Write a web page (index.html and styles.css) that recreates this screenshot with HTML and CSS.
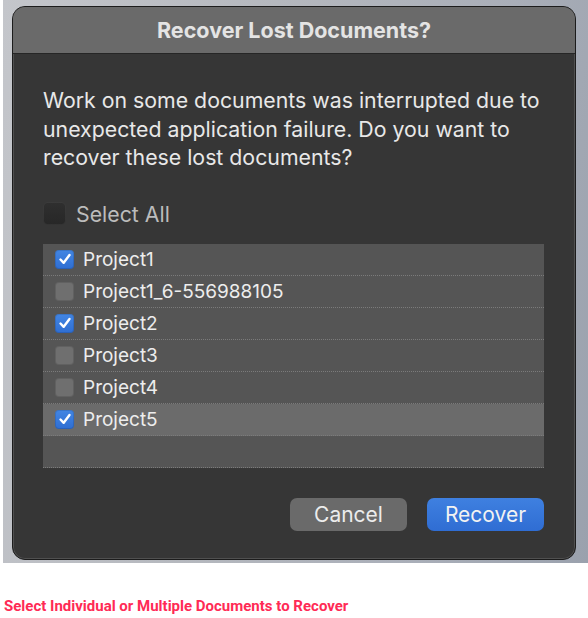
FILE: index.html
```html
<!DOCTYPE html>
<html lang="en">
  <head>
    <meta charset="UTF-8" />
    <meta name="viewport" content="width=device-width, initial-scale=1.0" />
    <title>Recover Lost Documents</title>
    <link rel="stylesheet" href="styles.css">
  </head>
  <body>
    <div class="screenshot">
      <div class="dialog">
        <div class="dialog-title">Recover Lost Documents?</div>

        <div class="dialog-body">
          <p class="message">
            Work on some documents was interrupted due to unexpected application failure. Do you want to recover these lost documents?
          </p>

          <label class="select-all">
            <span class="big-box"></span>
            <span>Select All</span>
          </label>

          <ul class="doc-list">
            <li class="doc-row">
              <span class="box checked">
                <svg viewBox="0 0 16 16"><path d="M3.5 8.5 L6.7 11.8 L12.5 4" /></svg>
              </span>
              Project1
            </li>
            <li class="doc-row">
              <span class="box"></span>
              Project1_6-556988105
            </li>
            <li class="doc-row">
              <span class="box checked">
                <svg viewBox="0 0 16 16"><path d="M3.5 8.5 L6.7 11.8 L12.5 4" /></svg>
              </span>
              Project2
            </li>
            <li class="doc-row">
              <span class="box"></span>
              Project3
            </li>
            <li class="doc-row">
              <span class="box"></span>
              Project4
            </li>
            <li class="doc-row selected">
              <span class="box checked">
                <svg viewBox="0 0 16 16"><path d="M3.5 8.5 L6.7 11.8 L12.5 4" /></svg>
              </span>
              Project5
            </li>
            <li class="doc-row empty"></li>
          </ul>

          <div class="dialog-footer">
            <button class="btn btn-cancel">Cancel</button>
            <button class="btn btn-recover">Recover</button>
          </div>
        </div>
      </div>
    </div>

    <p class="caption">Select Individual or Multiple Documents to Recover</p>
  </body>
</html>
```

FILE: styles.css
```css
body {
  margin: 0;
  background-color: #fff;
  font-family: Inter, "Noto Sans", sans-serif;
  overflow: hidden;
}

.screenshot {
  margin-left: 3px;
  width: 585px;
  height: 563px;
  padding: 6px 0 0 9px;
  box-sizing: border-box;
  background: linear-gradient(100deg, #c4c6cb 0%, #b5b8be 40%, #a9aeb8 75%, #9aa1ad 100%);
}

.dialog {
  width: 564px;
  height: 554px;
  box-sizing: border-box;
  background-color: #363636;
  border: 1px solid #1c1c1c;
  border-radius: 13px;
  box-shadow: inset 0 0 0 1px rgba(255, 255, 255, 0.13);
  overflow: hidden;
}

.dialog-title {
  height: 46px;
  display: flex;
  align-items: center;
  justify-content: center;
  background-color: #6a6a6a;
  border-bottom: 1px solid #262626;
  color: #e4e4e4;
  font-size: 21.5px;
  font-weight: 700;
}

.dialog-body {
  padding: 32px 31px 0 30px;
}

.message {
  margin: 0;
  font-size: 21.3px;
  line-height: 28.5px;
  color: #e8e8e8;
}

.select-all {
  display: flex;
  align-items: center;
  gap: 10px;
  margin-top: 30px;
  height: 24px;
  font-size: 21.3px;
  color: #bcbcbc;
}

.big-box {
  width: 23px;
  height: 23px;
  border-radius: 5px;
  background: linear-gradient(#2f2f2f, #272727);
  box-shadow: inset 0 0 0 1px rgba(255, 255, 255, 0.06);
}

.doc-list {
  list-style: none;
  margin: 18px 0 0;
  padding: 0;
  width: 501px;
  background-color: #555;
}

.doc-row {
  display: flex;
  align-items: center;
  gap: 9px;
  height: 31px;
  padding-left: 12px;
  border-bottom: 1px dotted #7b7b7b;
  font-size: 19px;
  color: #ededed;
}

.doc-row.selected {
  background-color: #6b6b6b;
}

.doc-row.empty {
  height: 31px;
}

.box {
  width: 19px;
  height: 19px;
  border-radius: 4px;
  background-color: #6f6f6f;
  box-shadow: inset 0 0 0 1px rgba(0, 0, 0, 0.12);
  display: flex;
  align-items: center;
  justify-content: center;
}

.box.checked {
  background: linear-gradient(#4386e3, #2f6ed2);
}

.box svg {
  width: 16px;
  height: 16px;
  fill: none;
  stroke: #fff;
  stroke-width: 2.4;
  stroke-linecap: round;
  stroke-linejoin: round;
}

.dialog-footer {
  display: flex;
  justify-content: flex-end;
  gap: 20px;
  width: 501px;
  margin-top: 30px;
}

.btn {
  width: 117px;
  height: 33px;
  border: none;
  border-radius: 7px;
  font-family: inherit;
  font-size: 21px;
  color: #ececec;
}

.btn-cancel {
  background-color: #6a6a6a;
}

.btn-recover {
  background: linear-gradient(#3f80e0, #2f6dd3);
  color: #f2f2f2;
}

.caption {
  margin: 34px 0 0 4px;
  font-family: Roboto, sans-serif;
  font-size: 15px;
  font-weight: 700;
  color: #ff2a55;
}
```
